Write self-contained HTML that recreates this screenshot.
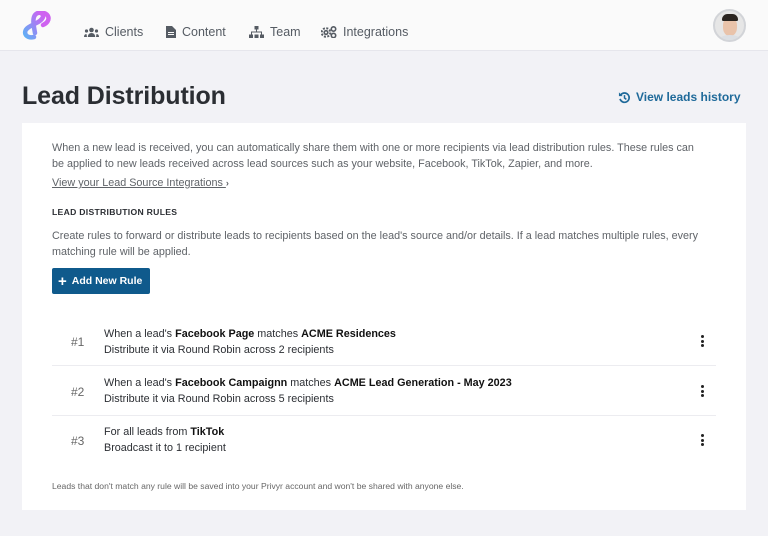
<!DOCTYPE html>
<html><head><meta charset="utf-8"><style>
*{margin:0;padding:0;box-sizing:border-box}
body{width:768px;height:536px;background:#f2f2f6;font-family:"Liberation Sans",sans-serif;color:#555a60;position:relative;overflow:hidden}
.hdr{position:absolute;left:0;top:0;width:768px;height:51px;background:#fafafa;border-bottom:1px solid #e6e6ec}
.nav{position:absolute;top:25px;font-size:12.5px;color:#555b63;display:flex;align-items:center}
.nav svg{margin-right:6px}
.av{position:absolute;left:713px;top:9px;width:33px;height:33px;border-radius:50%;background:#e6e6e6;border:2px solid #d2d4d8;overflow:hidden}
h1{position:absolute;left:22px;top:82px;font-size:25px;font-weight:bold;color:#2b2e33;letter-spacing:-0.1px}
.vh{position:absolute;left:618px;top:90px;font-size:12px;font-weight:bold;color:#1f6a9a;display:flex;align-items:center}
.card{position:absolute;left:22px;top:123px;width:724px;height:387px;background:#fff}
.p{position:absolute;left:30px;font-size:10.8px;line-height:15.5px;color:#5f6368;width:655px}
.lnk{text-decoration:underline;color:#5f6368}
.h{position:absolute;left:30px;top:84px;font-size:8.6px;font-weight:bold;color:#2b2e33;letter-spacing:0.3px}
.btn{position:absolute;left:30px;top:145px;width:98px;height:26px;background:#0f5a8c;border-radius:2px;color:#fff;font-weight:bold;font-size:10.5px;display:flex;align-items:center;padding-left:6px}
.row{position:absolute;left:30px;width:664px;height:49px;border-bottom:1px solid #ececf0}
.num{position:absolute;left:19px;top:18px;font-size:12px;color:#666}
.t{position:absolute;left:52px;font-size:10.8px;color:#2b2e33}
.t b{color:#111}
.dots{position:absolute;left:649px;top:18px;width:3px}
.dots i{display:block;width:3px;height:3px;background:#222;border-radius:50%;margin-bottom:1.5px}
.foot{position:absolute;left:30px;top:358px;font-size:8.6px;color:#666}
</style></head><body>
<div class="hdr">
<svg style="position:absolute;left:21px;top:11px" width="32" height="30" viewBox="0 0 32 30"><defs><linearGradient id="g" x1="0" y1="1" x2="1" y2="0"><stop offset="0" stop-color="#5fb0f5"/><stop offset="1" stop-color="#d45df2"/></linearGradient></defs><path d="M13 26 C4 28 1 20 8 16 C14 12 20 11 22 6 C23 2 17 0 14 4 C11 8 13 16 14 22" fill="none" stroke="url(#g)" stroke-width="4.5" stroke-linecap="round"/><path d="M20 2 C28 1 31 10 22 14" fill="none" stroke="#cf62f0" stroke-width="4.5" stroke-linecap="round"/></svg>
<div class="nav" style="left:84px"><svg width="15" height="11" viewBox="0 0 15 11" fill="#555b63"><circle cx="7.5" cy="3" r="2.3"/><circle cx="2.5" cy="4" r="1.6"/><circle cx="12.5" cy="4" r="1.6"/><path d="M3.8 10 Q4 6 7.5 6 Q11 6 11.2 10Z"/><path d="M0 10 Q0 7 2.5 7 L3 10Z M15 10 Q15 7 12.5 7 L12 10Z"/></svg>Clients</div>
<div class="nav" style="left:166px"><svg width="10" height="12" viewBox="0 0 10 12" fill="#555b63"><path d="M0 0H6L10 4V12H0Z"/><rect x="2" y="6" width="6" height="1" fill="#fafafa"/><rect x="2" y="8" width="6" height="1" fill="#fafafa"/></svg>Content</div>
<div class="nav" style="left:249px"><svg width="15" height="12" viewBox="0 0 15 12" fill="#555b63"><rect x="5.5" y="0" width="4" height="3.5"/><rect x="7" y="3" width="1" height="3"/><rect x="2" y="5.5" width="11" height="1"/><rect x="2" y="5.5" width="1" height="3"/><rect x="12" y="5.5" width="1" height="3"/><rect x="0" y="8.5" width="4" height="3.5"/><rect x="5.5" y="8.5" width="4" height="3.5"/><rect x="11" y="8.5" width="4" height="3.5"/></svg>Team</div>
<div class="nav" style="left:321px"><svg width="16" height="12" viewBox="0 0 16 12" fill="#555b63"><circle cx="5" cy="6.5" r="4.3" stroke="#555b63" stroke-width="2" stroke-dasharray="2 1.4" fill="none"/><circle cx="5" cy="6.5" r="2.6"/><circle cx="5" cy="6.5" r="1" fill="#fafafa"/><circle cx="12.5" cy="3" r="2.2" fill="none" stroke="#555b63" stroke-width="1.6"/><circle cx="12.5" cy="9.5" r="2.2" fill="none" stroke="#555b63" stroke-width="1.6"/></svg>Integrations</div>
<div class="av"><div style="position:absolute;left:8px;top:6px;width:14px;height:19px;border-radius:45%;background:#e9c3aa"></div><div style="position:absolute;left:7px;top:3px;width:16px;height:7px;border-radius:8px 8px 2px 2px;background:#2a2420"></div><div style="position:absolute;left:4px;top:24px;width:22px;height:10px;border-radius:50% 50% 0 0;background:#dcdfe3"></div></div>
</div>
<h1>Lead Distribution</h1>
<div class="vh"><svg width="13" height="13" viewBox="0 0 14 14" style="margin-right:5px"><path d="M3 4.2 A5 5 0 1 1 2.2 8.5" fill="none" stroke="#1f6a9a" stroke-width="1.8"/><path d="M1 1.5V5.5H5Z" fill="#1f6a9a"/><path d="M7 4.5V7.5L9 9" fill="none" stroke="#1f6a9a" stroke-width="1.6"/></svg>View leads history</div>
<div class="card">
<div class="p" style="top:18px">When a new lead is received, you can automatically share them with one or more recipients via lead distribution rules. These rules can be applied to new leads received across lead sources such as your website, Facebook, TikTok, Zapier, and more.</div>
<div class="p" style="top:53px"><span class="lnk">View your Lead Source Integrations </span> <b style="font-size:9px">&#8250;</b></div>
<div class="h">LEAD DISTRIBUTION RULES</div>
<div class="p" style="top:106px;width:665px">Create rules to forward or distribute leads to recipients based on the lead's source and/or details. If a lead matches multiple rules, every matching rule will be applied.</div>
<div class="btn"><span style="font-size:15px;margin-right:5px;line-height:1">+</span>Add New Rule</div>
<div class="row" style="top:194px"><div class="num">#1</div><div class="t" style="top:11px">When a lead's <b>Facebook Page</b> matches <b>ACME Residences</b></div><div class="t" style="top:27px">Distribute it via Round Robin across 2 recipients</div><div class="dots"><i></i><i></i><i></i></div></div>
<div class="row" style="top:244px"><div class="num">#2</div><div class="t" style="top:10px">When a lead's <b>Facebook Campaignn</b> matches <b>ACME Lead Generation - May 2023</b></div><div class="t" style="top:26px">Distribute it via Round Robin across 5 recipients</div><div class="dots"><i></i><i></i><i></i></div></div>
<div class="row" style="top:293px;border-bottom:none"><div class="num">#3</div><div class="t" style="top:10px">For all leads from <b>TikTok</b></div><div class="t" style="top:26px">Broadcast it to 1 recipient</div><div class="dots"><i></i><i></i><i></i></div></div>
<div class="foot">Leads that don't match any rule will be saved into your Privyr account and won't be shared with anyone else.</div>
</div>
</body></html>
